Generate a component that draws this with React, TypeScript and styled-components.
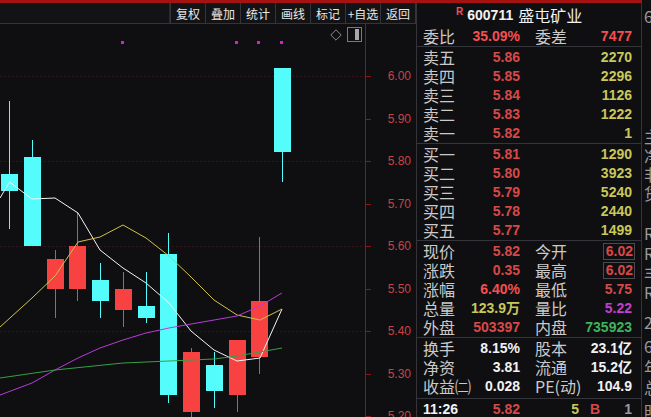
import React from "react";
import styled, { createGlobalStyle } from "styled-components";

const COLORS = {
  BG: "#0f0f12",
  TOOLBAR: "#131316",
  LINE: "#34343a",
  AXIS: "#8c1616",
  AXIS_TEXT: "#c84444",
  GRID: "#34141a",
  LABEL: "#cacaca",
  RED: "#d84848",
  BRIGHT_RED: "#f45050",
  YELLOW: "#c8c85a",
  GREEN: "#3cb45a",
  PURPLE: "#c040d0",
  WHITE: "#f2f2f2",
  GRAY: "#9a9a9a",
  CYAN: "#54fcfc",
  CANDLE_RED: "#f84242",
  MAGENTA: "#d020d0"
};

const NUM_FONT = `"Liberation Sans", "Noto Sans CJK SC", Arial, sans-serif`;
const CJK_FONT = `"Noto Sans CJK SC", "Noto Sans", sans-serif`;

const TOOLS = ["复权", "叠加", "统计", "画线", "标记", "+自选", "返回"];
const AXIS_LABELS = ["6.00", "5.90", "5.80", "5.70", "5.60", "5.50", "5.40", "5.30", "5.20"];

const ASKS = [
  ["卖五", "5.86", "2270"],
  ["卖四", "5.85", "2296"],
  ["卖三", "5.84", "1126"],
  ["卖二", "5.83", "1222"],
  ["卖一", "5.82", "1"]
];

const BIDS = [
  ["买一", "5.81", "1290"],
  ["买二", "5.80", "3923"],
  ["买三", "5.79", "5240"],
  ["买四", "5.78", "2440"],
  ["买五", "5.77", "1499"]
];

type Stat = { label: string; value: string; color: string; boxed?: boolean };

const STATS: [Stat, Stat][] = [
  [
    { label: "现价", value: "5.82", color: COLORS.RED },
    { label: "今开", value: "6.02", color: COLORS.RED, boxed: true }
  ],
  [
    { label: "涨跌", value: "0.35", color: COLORS.RED },
    { label: "最高", value: "6.02", color: COLORS.RED, boxed: true }
  ],
  [
    { label: "涨幅", value: "6.40%", color: COLORS.BRIGHT_RED },
    { label: "最低", value: "5.75", color: COLORS.RED }
  ],
  [
    { label: "总量", value: "123.9万", color: COLORS.YELLOW },
    { label: "量比", value: "5.22", color: COLORS.PURPLE }
  ],
  [
    { label: "外盘", value: "503397", color: COLORS.RED },
    { label: "内盘", value: "735923", color: COLORS.GREEN }
  ]
];

const FUNDAMENTALS: [Stat, Stat][] = [
  [
    { label: "换手", value: "8.15%", color: COLORS.WHITE },
    { label: "股本", value: "23.1亿", color: COLORS.WHITE }
  ],
  [
    { label: "净资", value: "3.81", color: COLORS.WHITE },
    { label: "流通", value: "15.2亿", color: COLORS.WHITE }
  ],
  [
    { label: "收益㈡", value: "0.028", color: COLORS.WHITE },
    { label: "PE(动)", value: "104.9", color: COLORS.WHITE }
  ]
];

const SIDE_TEXT: [string, number][] = [
  ["6", 16],
  ["主", 136],
  ["净", 155],
  ["非", 174],
  ["货", 193],
  ["R", 233],
  ["R", 253],
  ["丰", 273],
  ["R", 292],
  ["2", 322],
  ["6", 346],
  ["年", 367],
  ["总", 387],
  ["明", 411]
];

// price -> page y (6.00 sits at y=76, 0.10 per 42.5px)
const priceY = (p: number) => 76 + (6 - p) * 425;
const CANDLE_STEP = 22.75;
const CANDLE_W = 17;

const CANDLES = [
  { o: 5.77, c: 5.73, h: 5.94, l: 5.64 },
  { o: 5.81, c: 5.6, h: 5.85, l: 5.6 },
  { o: 5.5, c: 5.57, h: 5.59, l: 5.43 },
  { o: 5.5, c: 5.6, h: 5.68, l: 5.47 },
  { o: 5.52, c: 5.47, h: 5.56, l: 5.43 },
  { o: 5.45, c: 5.5, h: 5.54, l: 5.41 },
  { o: 5.46, c: 5.43, h: 5.54, l: 5.42 },
  { o: 5.58, c: 5.25, h: 5.63, l: 5.23 },
  { o: 5.21, c: 5.35, h: 5.36, l: 5.19 },
  { o: 5.32, c: 5.26, h: 5.35, l: 5.22 },
  { o: 5.25, c: 5.38, h: 5.38, l: 5.21 },
  { o: 5.34, c: 5.47, h: 5.62, l: 5.3 },
  { o: 6.02, c: 5.82, h: 6.02, l: 5.75 }
];

const MA_LINES = [
  {
    color: "#f4f4f4",
    points: [[0, 198], [9.5, 182], [32, 199], [55, 198], [78, 213], [100, 250], [123, 268], [146, 283], [169, 303], [191, 331], [214, 350], [237, 361], [260, 358], [282, 309]]
  },
  {
    color: "#cfc24a",
    points: [[0, 327], [32, 298], [55, 276], [78, 242], [100, 237], [123, 225], [146, 238], [169, 256], [191, 277], [214, 300], [237, 315], [260, 320], [282, 309]]
  },
  {
    color: "#b83ad8",
    points: [[0, 395], [32, 383], [55, 370], [78, 358], [100, 348], [123, 340], [146, 333], [169, 328], [191, 324], [214, 320], [237, 316], [260, 306], [282, 293]]
  },
  {
    color: "#36a044",
    points: [[0, 378], [55, 370], [123, 363], [169, 361], [214, 359], [237, 356], [260, 352], [282, 348]]
  }
];

const SIGNAL_DOTS = [122, 236, 258, 281];
const GRID_PRICES = [6.0, 5.8, 5.6, 5.4];

const KChart = () => (
  <ChartSvg width={365} height={393} viewBox="0 24 365 393">
    {GRID_PRICES.map((p) => (
      <line
        key={p}
        x1={0}
        x2={365}
        y1={Math.round(priceY(p)) + 0.5}
        y2={Math.round(priceY(p)) + 0.5}
        stroke={COLORS.GRID}
        strokeDasharray="2 2"
      />
    ))}
    {CANDLES.map(({ o, c, h, l }, i) => {
      const left = Math.round(1 + CANDLE_STEP * i);
      const color = c > o ? COLORS.CANDLE_RED : COLORS.CYAN;
      const top = Math.round(priceY(Math.max(o, c)));
      const bottom = Math.round(priceY(Math.min(o, c)));
      return (
        <g key={i}>
          <line
            x1={left + 8.5}
            x2={left + 8.5}
            y1={Math.round(priceY(h))}
            y2={Math.round(priceY(l))}
            stroke={color}
          />
          <rect x={left} y={top} width={CANDLE_W} height={Math.max(bottom - top, 1)} fill={color} />
        </g>
      );
    })}
    {MA_LINES.map(({ color, points }) => (
      <polyline
        key={color}
        points={points.map(([x, y]) => `${x},${y}`).join(" ")}
        fill="none"
        stroke={color}
        strokeWidth={1}
        shapeRendering="auto"
      />
    ))}
    {SIGNAL_DOTS.map((x) => (
      <rect key={x} x={x - 1.5} y={40.5} width={3} height={3} fill={COLORS.MAGENTA} />
    ))}
  </ChartSvg>
);

const QuoteRow = ({ left, right }: { left: Stat; right: Stat }) => (
  <Row>
    <Label>{left.label}</Label>
    <Value $color={left.color}>{left.value}</Value>
    <span />
    <Label>{right.label}</Label>
    <Value $color={right.color}>
      {right.boxed ? <Boxed>{right.value}</Boxed> : right.value}
    </Value>
  </Row>
);

const OrderRow = ({ label, price, volume }: { label: string; price: string; volume: string }) => (
  <Row>
    <Label>{label}</Label>
    <Value $color={COLORS.RED}>{price}</Value>
    <span />
    <Volume>{volume}</Volume>
  </Row>
);

const App = () => (
  <>
    <GlobalStyle />
    <Screen>
      <Main>
        <RedStripe />
        <Body>
          <ChartSide>
            <Toolbar>
              <ToolGroup>
                {TOOLS.map((t) => (
                  <ToolButton key={t}>{t}</ToolButton>
                ))}
              </ToolGroup>
            </Toolbar>
            <ChartRow>
              <ChartPane>
                <KChart />
                <ChartTools>
                  <svg width={12} height={12} viewBox="0 0 12 12">
                    <path d="M6 0.8 L11.2 6 L6 11.2 L0.8 6 Z" fill="none" stroke="#8a8a8a" />
                  </svg>
                  <svg width={15} height={15} viewBox="0 0 15 15">
                    <rect x={0.5} y={0.5} width={14} height={14} fill="none" stroke="#7a7a7a" />
                    <rect x={8} y={2} width={4} height={11} fill="#a8a8a8" />
                  </svg>
                </ChartTools>
              </ChartPane>
              <PriceAxis>
                {AXIS_LABELS.map((p) => (
                  <AxisTick key={p}>{p}</AxisTick>
                ))}
              </PriceAxis>
            </ChartRow>
          </ChartSide>

          <QuotePanel>
            <TitleBar>
              <Badge>R</Badge>
              <Code>600711</Code>
              <StockName>盛屯矿业</StockName>
            </TitleBar>
            <Section $first>
              <Row>
                <Label>委比</Label>
                <Value $color={COLORS.BRIGHT_RED}>35.09%</Value>
                <span />
                <Label>委差</Label>
                <Value $color={COLORS.BRIGHT_RED}>7477</Value>
              </Row>
            </Section>
            <Section>
              {ASKS.map(([label, price, volume]) => (
                <OrderRow key={label} label={label} price={price} volume={volume} />
              ))}
            </Section>
            <Section>
              {BIDS.map(([label, price, volume]) => (
                <OrderRow key={label} label={label} price={price} volume={volume} />
              ))}
            </Section>
            <Section>
              {STATS.map(([l, r]) => (
                <QuoteRow key={l.label} left={l} right={r} />
              ))}
            </Section>
            <Section $padBottom>
              {FUNDAMENTALS.map(([l, r]) => (
                <QuoteRow key={l.label} left={l} right={r} />
              ))}
            </Section>
            <TickRow>
              <TickTime>11:26</TickTime>
              <Value $color={COLORS.RED}>5.82</Value>
              <span />
              <Value $color={COLORS.YELLOW}>5</Value>
              <TickTail>
                <Value $color={COLORS.RED}>B</Value>
                <Value $color={COLORS.GRAY}>1</Value>
              </TickTail>
            </TickRow>
          </QuotePanel>
        </Body>
      </Main>
      <SideStrip>
        {SIDE_TEXT.map(([t, y], i) => (
          <SideCell key={i} $gap={i === 0 ? y - 9.5 : y - SIDE_TEXT[i - 1][1] - 19}>
            {t}
          </SideCell>
        ))}
      </SideStrip>
    </Screen>
  </>
);

const GlobalStyle = createGlobalStyle`
  html, body {
    margin: 0;
    padding: 0;
    background: ${COLORS.BG};
    overflow: hidden;
  }
  * {
    box-sizing: border-box;
  }
`;

const Screen = styled.div`
  display: flex;
  width: 651px;
  height: 417px;
  overflow: hidden;
  background: ${COLORS.BG};
`;

const Main = styled.div`
  width: 642px;
  display: flex;
  flex-direction: column;
`;

const RedStripe = styled.div`
  height: 3px;
  background: #a51212;
  flex-shrink: 0;
`;

const Body = styled.div`
  flex: 1;
  display: flex;
  min-height: 0;
`;

const ChartSide = styled.div`
  width: 416px;
  display: flex;
  flex-direction: column;
`;

const Toolbar = styled.div`
  height: 21px;
  flex-shrink: 0;
  display: flex;
  justify-content: flex-end;
  background: ${COLORS.TOOLBAR};
  border-bottom: 1px solid ${COLORS.LINE};
  border-right: 1px solid ${COLORS.LINE};
`;

const ToolGroup = styled.div`
  display: flex;
  border-left: 1px solid #2a2a2e;
`;

const ToolButton = styled.div`
  width: 35px;
  display: flex;
  align-items: center;
  justify-content: center;
  border-left: 1px solid ${COLORS.LINE};
  font-family: ${CJK_FONT};
  font-size: 12px;
  color: #e8e8e8;
  white-space: nowrap;
`;

const ChartRow = styled.div`
  flex: 1;
  display: flex;
  min-height: 0;
`;

const ChartPane = styled.div`
  position: relative;
  width: 365px;
  overflow: hidden;
`;

const ChartSvg = styled.svg`
  display: block;
  shape-rendering: crispEdges;
`;

const ChartTools = styled.div`
  position: absolute;
  top: 3px;
  right: 3px;
  display: flex;
  align-items: center;
  gap: 5px;

  svg {
    display: block;
  }
`;

const PriceAxis = styled.div`
  width: 51px;
  border-left: 1px solid ${COLORS.AXIS};
  padding-top: 30.75px;
  overflow: hidden;
`;

const AxisTick = styled.div`
  position: relative;
  height: 42.5px;
  display: flex;
  align-items: center;
  justify-content: flex-end;
  padding-right: 5px;
  font-family: ${NUM_FONT};
  font-size: 12px;
  color: ${COLORS.AXIS_TEXT};

  &::before {
    content: "";
    position: absolute;
    left: 0;
    top: 50%;
    width: 5px;
    height: 1px;
    background: ${COLORS.AXIS};
  }
`;

const QuotePanel = styled.div`
  width: 226px;
  border-left: 1px solid ${COLORS.LINE};
  border-right: 1px solid ${COLORS.LINE};
  display: flex;
  flex-direction: column;
  padding-left: 6px;
`;

const TitleBar = styled.div`
  height: 27px;
  display: flex;
  align-items: center;
  padding-left: 33px;
  color: ${COLORS.WHITE};
`;

const Badge = styled.span`
  font-family: ${NUM_FONT};
  font-weight: 700;
  font-size: 10px;
  line-height: 10px;
  color: ${COLORS.BRIGHT_RED};
  align-self: flex-start;
  margin-top: 4px;
  margin-right: 4px;
`;

const Code = styled.span`
  font-family: ${NUM_FONT};
  font-weight: 700;
  font-size: 14px;
  margin-right: 5px;
`;

const StockName = styled.span`
  font-family: ${CJK_FONT};
  font-size: 16px;
`;

const Section = styled.div<{ $first?: boolean; $padBottom?: boolean }>`
  margin-left: -6px;
  padding-left: 6px;
  padding-top: ${({ $first }) => ($first ? 0 : 1)}px;
  padding-bottom: ${({ $padBottom }) => ($padBottom ? 2 : 0)}px;
  border-bottom: 1px solid ${COLORS.LINE};
`;

const Row = styled.div`
  height: 19px;
  display: grid;
  grid-template-columns: 44px 53px 15px 44px 53px;
  align-items: center;
`;

const Label = styled.span`
  font-family: ${CJK_FONT};
  font-size: 16px;
  line-height: 19px;
  color: ${COLORS.LABEL};
  white-space: nowrap;
`;

const Value = styled.span<{ $color: string }>`
  font-family: ${NUM_FONT};
  font-weight: 700;
  font-size: 14px;
  line-height: 19px;
  color: ${({ $color }) => $color};
  text-align: right;
  white-space: nowrap;
`;

const Volume = styled(Value).attrs({ $color: COLORS.YELLOW })`
  grid-column: 4 / span 2;
`;

const Boxed = styled.span`
  display: inline-block;
  border: 1px solid #4a4a4e;
  padding: 0 1px 0 2px;
  margin-right: -3px;
  line-height: 15px;
`;

const TickRow = styled(Row)`
  margin-top: 1px;
`;

const TickTime = styled(Value).attrs({ $color: COLORS.WHITE })`
  text-align: left;
`;

const TickTail = styled.span`
  display: flex;
  justify-content: space-between;
  padding-left: 11px;
`;

const SideStrip = styled.div`
  width: 9px;
  display: flex;
  flex-direction: column;
  overflow: hidden;
  padding-left: 2px;
`;

const SideCell = styled.div<{ $gap: number }>`
  margin-top: ${({ $gap }) => $gap}px;
  height: 19px;
  line-height: 19px;
  flex-shrink: 0;
  font-family: ${CJK_FONT};
  font-size: 16px;
  color: ${COLORS.GRAY};
  white-space: nowrap;
`;

export default App;
